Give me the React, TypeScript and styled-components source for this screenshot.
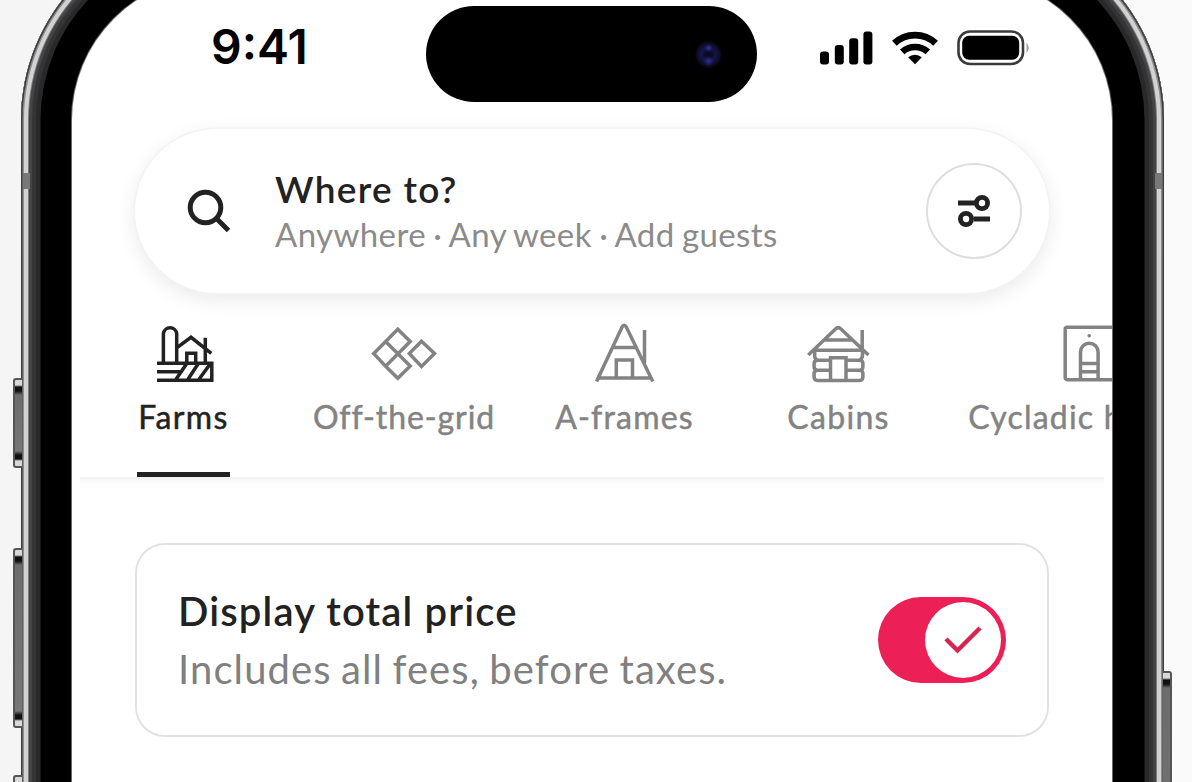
import React from 'react'
import styled, { createGlobalStyle } from 'styled-components'

type CategoryT = {
    label: string,
    width: number,
    gap: number,
    spacing: number,
    active?: boolean,
    origin: string,
    icon: React.ReactNode
}

const GlobalStyle = createGlobalStyle`
  * {
    box-sizing: border-box;
  }
  body {
    margin: 0;
    background: #f8f8f8;
    font-family: Lato, "Liberation Sans", sans-serif;
    color: #222222;
  }
`
const Page = styled.main`
  width: 1192px;
  height: 782px;
  overflow: hidden;
  background: linear-gradient(90deg, #f5f5f5, #fafafa);
`
const Phone = styled.div`
  position: relative;
  width: 1143px;
  height: 1200px;
  margin: -75px 0 0 20.5px;
  padding: 52px 51.5px;
  border-radius: 195px;
  background: #000000;
  box-shadow:
    inset 0 0 0 1.5px #3c3c3d,
    inset 0 0 0 3px #8d8d8e,
    inset 0 0 0 7px #d2d2d2,
    inset 0 0 0 8px #7c7c7d,
    inset 0 0 0 11px #444446,
    inset 0 0 0 15px #343436,
    inset 0 0 0 19.5px #29292a;
`
const Screen = styled.div`
  height: 100%;
  overflow: hidden;
  border-radius: 143px;
  background: #ffffff;
  box-shadow: 0 0 0 1px #6d686b;
`
const SideKey = styled.div<{ $side: 'left' | 'right', $top: number, $height: number }>`
  position: absolute;
  ${props => props.$side}: -8px;
  top: ${props => props.$top}px;
  width: 9px;
  height: ${props => props.$height}px;
  border: 2px solid #555555;
  border-${props => props.$side === 'left' ? 'right' : 'left'}: 0;
  border-radius: ${props => props.$side === 'left' ? '3px 0 0 3px' : '0 3px 3px 0'};
  background: linear-gradient(180deg, #d8d8d8 5px, #111111 7px, #111111 11px, #6c6c6c 15px,
    #777777 calc(100% - 15px), #111111 calc(100% - 11px), #111111 calc(100% - 7px), #d8d8d8 calc(100% - 5px));
`
const Antenna = styled.div<{ $side: 'left' | 'right' }>`
  position: absolute;
  ${props => props.$side}: 2px;
  top: 248px;
  width: 7px;
  height: 16px;
  background: #777778;
`
const StatusBar = styled.header`
  display: grid;
  grid-template-columns: 354px 331px 1fr;
  height: 125px;
  padding-top: 29px;
`
const Time = styled.div`
  padding: 12px 0 0 139px;
  font-family: Inter, sans-serif;
  font-size: 48px;
  font-weight: 600;
  line-height: 58px;
  color: #000000;
`
const Island = styled.div`
  display: flex;
  align-items: center;
  justify-content: flex-end;
  padding-right: 34px;
  border-radius: 48px;
  background: #000000;
`
const Lens = styled.div`
  width: 29px;
  height: 29px;
  border-radius: 50%;
  background:
    radial-gradient(circle at 50% 28%, #34349a 0, transparent 4px),
    radial-gradient(circle at 50% 72%, #2f2f92 0, transparent 5px),
    radial-gradient(circle, #0a0a28 3px, #15154a 7px, #0d0d28 11px, #000000 14px);
`
const StatusIcons = styled.div`
  display: flex;
  align-items: flex-start;
  gap: 19px;
  padding: 24px 0 0 63px;
`
const SearchBar = styled.section`
  display: flex;
  align-items: center;
  width: 914px;
  height: 164px;
  margin: 27px 0 0 63px;
  padding: 0 27px 0 52px;
  border-radius: 82px;
  background: #ffffff;
  box-shadow: 0 0 0 1.5px #f3f3f3, 0 6px 20px rgba(0, 0, 0, 0.09);
`
const SearchText = styled.div`
  flex: 1;
  padding: 1px 0 0 44px;
`
const SearchTitle = styled.h2`
  margin: 0;
  font-size: 37px;
  font-weight: 600;
  line-height: 44px;
  letter-spacing: 1.3px;
  white-space: nowrap;
`
const SearchHint = styled.p`
  margin: 0;
  font-size: 33px;
  line-height: 46px;
  letter-spacing: 0.4px;
  word-spacing: -1.5px;
  white-space: nowrap;
  color: #8b8b8b;
`
const FilterButton = styled.button`
  display: flex;
  align-items: center;
  justify-content: center;
  width: 96px;
  height: 96px;
  padding: 0;
  border: 2px solid #dedede;
  border-radius: 50%;
  background: #ffffff;
`
const Tabs = styled.nav`
  display: flex;
  width: 1200px;
  height: 184px;
  padding: 30px 0 0 65px;
`
const Tab = styled.div<{ $width: number, $gap: number, $active?: boolean }>`
  display: flex;
  flex: none;
  flex-direction: column;
  align-items: center;
  width: ${props => props.$width}px;
  margin-right: ${props => props.$gap}px;
  border-bottom: 5px solid ${props => props.$active ? '#222222' : 'transparent'};
  color: ${props => props.$active ? '#222222' : '#838383'};
`
const TabLabel = styled.span<{ $spacing: number }>`
  margin-top: 10px;
  font-size: 32px;
  line-height: 44px;
  letter-spacing: ${props => props.$spacing}px;
  white-space: nowrap;
  -webkit-text-stroke: 0.5px currentColor;
`
const Divider = styled.div`
  height: 9px;
  margin: 0 8px;
  background: linear-gradient(180deg, #f0f0f0, #fafafa 4px, #ffffff);
`
const PriceCard = styled.section`
  display: flex;
  align-items: center;
  justify-content: space-between;
  width: 914px;
  height: 194px;
  margin: 57px 0 0 63px;
  padding: 0 41px;
  border: 2px solid #e2e2e2;
  border-radius: 30px;
`
const PriceTitle = styled.h2`
  margin: 0;
  font-size: 40px;
  font-weight: 600;
  line-height: 58px;
  letter-spacing: 1.15px;
  white-space: nowrap;
`
const PriceNote = styled.p`
  margin: 0;
  font-size: 40px;
  line-height: 58px;
  letter-spacing: 1.1px;
  word-spacing: -2px;
  white-space: nowrap;
  color: #808080;
`
const Toggle = styled.button`
  display: flex;
  align-items: center;
  justify-content: flex-end;
  width: 128px;
  height: 86px;
  padding: 0 5px;
  border: 0;
  border-radius: 43px;
  background: #ec1f57;
`
const Knob = styled.span`
  display: flex;
  align-items: center;
  justify-content: center;
  width: 76px;
  height: 76px;
  border-radius: 50%;
  background: #ffffff;
`

const categories: CategoryT[] = [
  {
    label: 'Farms',
    width: 93,
    gap: 82,
    spacing: 1.4,
    active: true,
    origin: '-5 -1.3',
    icon: (
      <>
        <path d="M7.4 38V9.4a6.7 6.7 0 0 1 13.3 0V38M20.7 23.5 35 13l20.3 16M49.3 13.5V38M30.8 38v-9h8.9v9" />
        <path d="M1 39h54.8v17H1M1 47.4h23M31 39 20 55M42.5 39 32 55M54 40 43 55" />
      </>
    )
  },
  {
    label: 'Off-the-grid',
    width: 184,
    gap: 59,
    spacing: 0.9,
    origin: '-0.5 -4',
    icon: (
      <path d="m26.3 2.3 12.4 12.3-24.6 24.6L2.3 26.6 26.3 2.3ZM14.1 14.4l24.6 24.7-12.4 12.2-12.2-12.1M50 14.2l13 12.3-13 13-12.2-13Z" />
    )
  },
  {
    label: 'A-frames',
    width: 139,
    gap: 93,
    spacing: 1.2,
    origin: '-2.5 0',
    icon: (
      <path d="M2 58.5 27.6 4q2-3.4 4.2 0l26.5 54.5M18.7 24.4h22.6M4.5 55H56M21.8 55V37H38v18M50 7v33" />
    )
  },
  {
    label: 'Cabins',
    width: 103,
    gap: 77,
    spacing: 1.3,
    origin: '-0.5 -2',
    icon: (
      <>
        <path d="M1.8 30 29 4q2.7-2.6 5.4 0L62 30M18 15h28M7 25.2h49M55.7 5v20" />
        <path d="M24 35.2H10.5q-3-2-2.3-5.5v-4M24 35.2H11q-3.4 0-3.4 3.4v3.2q0 3.4 3.4 3.4h13M24 45.2H11q-3.4 0-3.4 3.4v3.4q0 3.4 3.4 3.4h42q3.4 0 3.4-3.4v-3.4q0-3.4-3.4-3.4H39.5M39.5 35.2H53q3.4 0 3.4 3.4v3.2q0 3.4-3.4 3.4M53 35.2q3.4-2 3-5.5v-4M24 55V32.8h15.5V55" />
      </>
    )
  },
  {
    label: 'Cycladic homes',
    width: 237,
    gap: 0,
    spacing: 1.2,
    origin: '-9.5 -2',
    icon: (
      <>
        <rect x="2.7" y="2.3" width="52" height="52.4" rx="2" />
        <path d="M18 54.7V27a8.8 8.8 0 0 1 17.6 0v27.7M18 38.4h17.6M18 46.7h17.6" />
        <circle cx="26.7" cy="10.7" r="1.8" fill="currentColor" stroke="none" />
      </>
    )
  }
]

const SignalIcon = () => (
  <svg width="53" height="36" viewBox="0 0 53 36">
    <rect x="0" y="21.5" width="9" height="13" rx="3" />
    <rect x="14.8" y="15" width="9" height="19.5" rx="3" />
    <rect x="29.2" y="8.2" width="9" height="26.3" rx="3" />
    <rect x="43.4" y="1.4" width="9" height="33.1" rx="3" />
  </svg>
)

const WifiIcon = () => (
  <svg width="46" height="36" viewBox="0 0 46 36" fill="none" stroke="#000000" strokeWidth="6.8">
    <path d="M2.4 13.3a30 30 0 0 1 41.2 0" />
    <path d="M10.2 21.9a19 19 0 0 1 25.6 0" strokeWidth="6.6" />
    <path d="M16.2 27.2a10.5 10.5 0 0 1 13.6 0L23 34.3Z" fill="#000000" stroke="none" />
  </svg>
)

const BatteryIcon = () => (
  <svg width="75" height="36" viewBox="0 0 75 36">
    <rect x="1.5" y="1.5" width="64.5" height="32.5" rx="11.5" fill="none" stroke="#3a3a3a" strokeWidth="2.6" />
    <rect x="5.2" y="5.8" width="57" height="24" rx="7" />
    <path d="M69.5 12.5q4.5 5.2 0 10.5Z" fill="#a2a2a2" />
  </svg>
)

const App: React.FC = () => {
  return (
        <Page>
            <GlobalStyle />
            <Phone>
                <SideKey $side="left" $top={453} $height={90} />
                <SideKey $side="left" $top={623} $height={180} />
                <SideKey $side="left" $top={850} $height={180} />
                <SideKey $side="right" $top={746} $height={280} />
                <Antenna $side="left" />
                <Antenna $side="right" />
                <Screen>
                    <StatusBar>
                        <Time>9:41</Time>
                        <Island>
                            <Lens />
                        </Island>
                        <StatusIcons>
                            <SignalIcon />
                            <WifiIcon />
                            <BatteryIcon />
                        </StatusIcons>
                    </StatusBar>
                    <SearchBar>
                        <svg width="44" height="44" viewBox="0 0 44 44" fill="none" stroke="#222222" strokeWidth="5">
                            <circle cx="18.5" cy="18.5" r="15.3" />
                            <path d="m29.5 29.5 12 12" />
                        </svg>
                        <SearchText>
                            <SearchTitle>Where to?</SearchTitle>
                            <SearchHint>Anywhere · Any week · Add guests</SearchHint>
                        </SearchText>
                        <FilterButton>
                            <svg width="34" height="34" viewBox="0 0 34 34" fill="none" stroke="#222222" strokeWidth="4.8">
                                <path d="M1 9h17M17 25h16" />
                                <circle cx="25" cy="9" r="5.6" />
                                <circle cx="9" cy="25" r="5.6" />
                            </svg>
                        </FilterButton>
                    </SearchBar>
                    <Tabs>
                        {categories.map(category => {
                          return (
                                <Tab
                                    key={category.label}
                                    $width={category.width}
                                    $gap={category.gap}
                                    $active={category.active}
                                >
                                    <svg
                                        width="66"
                                        height="62"
                                        viewBox={`${category.origin} 66 62`}
                                        fill="none"
                                        stroke="currentColor"
                                        strokeWidth="3.5"
                                    >
                                        {category.icon}
                                    </svg>
                                    <TabLabel $spacing={category.spacing}>{category.label}</TabLabel>
                                </Tab>
                          )
                        })}
                    </Tabs>
                    <Divider />
                    <PriceCard>
                        <div>
                            <PriceTitle>Display total price</PriceTitle>
                            <PriceNote>Includes all fees, before taxes.</PriceNote>
                        </div>
                        <Toggle>
                            <Knob>
                                <svg width="38" height="28" viewBox="0 0 38 28" fill="none" stroke="#d8234f" strokeWidth="4.4">
                                    <path d="m2 13 11.5 11.5L36 2" />
                                </svg>
                            </Knob>
                        </Toggle>
                    </PriceCard>
                </Screen>
            </Phone>
        </Page>
  )
}

export default App
